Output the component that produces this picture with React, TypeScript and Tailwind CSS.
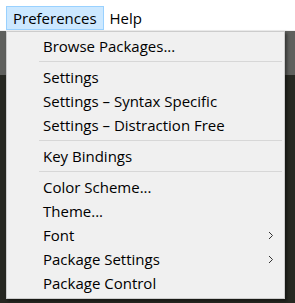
import React from "react";

type Entry = { label: string; sub?: boolean } | "sep";

const entries: Entry[] = [
  { label: "Browse Packages..." },
  "sep",
  { label: "Settings" },
  { label: "Settings – Syntax Specific" },
  { label: "Settings – Distraction Free" },
  "sep",
  { label: "Key Bindings" },
  "sep",
  { label: "Color Scheme..." },
  { label: "Theme..." },
  { label: "Font", sub: true },
  { label: "Package Settings", sub: true },
  { label: "Package Control" },
];

function Chevron() {
  return (
    <svg width="6" height="9" viewBox="0 0 6 9" className="text-[#333]">
      <path d="M1 1 L4.5 4.5 L1 8" fill="none" stroke="currentColor" strokeWidth="1" />
    </svg>
  );
}

export default function App() {
  return (
    <div className="relative w-[295px] h-[303px] overflow-hidden bg-[#272822] font-['Open_Sans','Noto_Sans',sans-serif] text-black">
      <div className="flex h-[31px] items-end border-b border-[#f0f0f0] bg-white pl-[6px] text-[15px]">
        <div className="flex h-[24px] items-center border border-[#99d1ff] bg-[#cce8ff] px-[6px]">
          Preferences
        </div>
        <div className="flex h-[24px] items-center pl-[6px]">Help</div>
      </div>
      <div className="h-[44px] bg-[#5f605d]" />

      <div className="absolute left-[6px] top-[31px] w-[279px] border border-[#cccccc] bg-[#f0f0f0] pt-[2px] pb-[3px] text-[15px] shadow-[2px_2px_3px_rgba(0,0,0,0.45)]">
        {entries.map((e, i) =>
          e === "sep" ? (
            <div key={i} className="flex h-[7px] items-center pl-[32px] pr-[2px]">
              <div className="h-px w-full bg-[#d7d7d7]" />
            </div>
          ) : (
            <div key={i} className="flex h-[24px] items-center justify-between pl-[36px] pr-[10px]">
              <span>{e.label}</span>
              {e.sub && <Chevron />}
            </div>
          )
        )}
      </div>
    </div>
  );
}
